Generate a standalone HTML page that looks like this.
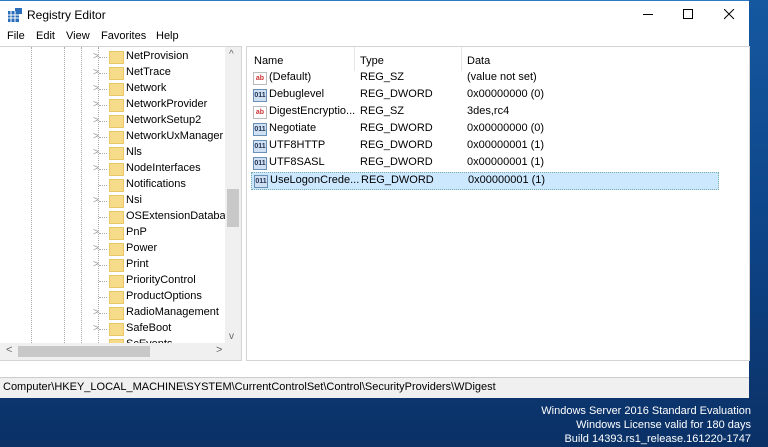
<!DOCTYPE html><html><head><style>
body{margin:0;width:768px;height:447px;overflow:hidden;background:linear-gradient(180deg,#1558a0 0%,#0d4386 55%,#0b3166 100%);font-family:"Liberation Sans",sans-serif;font-size:11px;color:#000;position:relative}
.win{position:absolute;left:0;top:0;width:749px;height:396px;background:#fff;border-top:1px solid #2b79c4}
.title{position:absolute;left:0;top:0;width:749px;height:28px}
.title span{position:absolute;left:27px;top:7px;font-size:12px}
.menu{position:absolute;top:29px;left:0;font-size:11px}
.menu span{position:absolute;top:0}
.tree{position:absolute;left:0;top:45px;width:241px;height:313px;border:1px solid #d4d4d4;border-left:none;overflow:hidden}
.item{position:absolute;left:126px;font-size:11px;white-space:nowrap}
.fold{position:absolute;left:109px;width:13px;height:11px;background:#f6dc8a;border:1px solid #e8c766}
.arr{position:absolute;left:93px;color:#999;font-size:10px}
.list{position:absolute;left:246px;top:45px;width:502px;height:313px;border:1px solid #d4d4d4}
.hdr{position:absolute;top:8px;font-size:11px}
.row{position:absolute;left:4px;height:16px;font-size:11px;width:498px}
.row span{position:absolute;top:1px;white-space:nowrap}
.ic{position:absolute;left:2px;top:2px;width:12px;height:11px;font-size:7px;font-weight:bold;line-height:11px;text-align:center;overflow:hidden}
.sz{color:#c33;border:1px solid #bbb;background:#fff}
.dw{color:#235;background:#cfe0f2;border:1px solid #6a8fb8}
.status{position:absolute;left:0;top:376px;width:749px;height:20px;background:#f0f0f0;border-top:1px solid #ccc;font-size:11px}
.wm{position:absolute;right:17px;color:#fff;font-size:11px;text-align:right}
</style></head><body>
<div class="win">
<div class="title">
<svg style="position:absolute;left:8px;top:7px" width="14" height="14"><rect x="0" y="3" width="11" height="11" fill="#2a6db8"/><rect x="7" y="0" width="7" height="6" fill="#2a6db8"/><path d="M0 7h11M0 10h11M3 3v11M7 3v11" stroke="#fff" stroke-width="1"/></svg>
<span>Registry Editor</span>
<div style="position:absolute;left:643px;top:13px;width:10px;height:1px;background:#000"></div>
<div style="position:absolute;left:683px;top:8px;width:8px;height:8px;border:1px solid #000"></div>
<svg style="position:absolute;left:724px;top:8px" width="11" height="11"><path d="M0 0L10 10M10 0L0 10" stroke="#000" stroke-width="1"/></svg>
</div>
<div class="menu"><span style="left:7px">File</span><span style="left:36px">Edit</span><span style="left:66px">View</span><span style="left:101px">Favorites</span><span style="left:156px">Help</span></div>
<div class="tree">
<div style="position:absolute;left:31px;top:0;height:300px;border-left:1px dotted #aaa"></div>
<div style="position:absolute;left:64px;top:0;height:300px;border-left:1px dotted #aaa"></div>
<div style="position:absolute;left:81px;top:0;height:300px;border-left:1px dotted #aaa"></div>
<div style="position:absolute;left:98px;top:0;height:300px;border-left:1px dotted #aaa"></div>
<div id="t"></div>
<div style="position:absolute;left:225px;top:0;width:16px;height:296px;background:#f0f0f0"></div>
<div style="position:absolute;left:227px;top:142px;width:12px;height:38px;background:#c8c8c8"></div>
<div style="position:absolute;left:229px;top:2px;color:#666;font-size:10px">^</div>
<div style="position:absolute;left:229px;top:284px;color:#666;font-size:10px">v</div>
<div style="position:absolute;left:0;top:296px;width:241px;height:17px;background:#f0f0f0"></div>
<div style="position:absolute;left:18px;top:299px;width:132px;height:11px;background:#c8c8c8"></div>
<div style="position:absolute;left:6px;top:297px;color:#666">&lt;</div>
<div style="position:absolute;left:216px;top:297px;color:#666">&gt;</div>
</div>
<div class="list">
<div class="hdr" style="left:7px">Name</div><div class="hdr" style="left:113px">Type</div><div class="hdr" style="left:220px">Data</div>
<div style="position:absolute;left:107px;top:0;height:24px;border-left:1px solid #e5e5e5"></div>
<div style="position:absolute;left:214px;top:0;height:24px;border-left:1px solid #e5e5e5"></div>
<div id="l"></div>
</div>
<div class="status"><span style="position:absolute;left:3px;top:3px">Computer\HKEY_LOCAL_MACHINE\SYSTEM\CurrentControlSet\Control\SecurityProviders\WDigest</span></div>
</div>
<div class="wm" style="top:405px">Windows Server 2016 Standard Evaluation</div>
<div class="wm" style="top:419px">Windows License valid for 180 days</div>
<div class="wm" style="top:433px">Build 14393.rs1_release.161220-1747</div>
<script>
var names=[["NetProvision",1],["NetTrace",1],["Network",1],["NetworkProvider",1],["NetworkSetup2",1],["NetworkUxManager",1],["Nls",1],["NodeInterfaces",1],["Notifications",0],["Nsi",1],["OSExtensionDatabase",0],["PnP",1],["Power",1],["Print",1],["PriorityControl",0],["ProductOptions",0],["RadioManagement",1],["SafeBoot",1],["ScEvents",0],["ScsiPort",0]];
var h="";names.forEach(function(n,i){var y=3+i*16;h+=(n[1]?'<div class="arr" style="top:'+(y+1)+'px">&gt;</div>':'')+'<div style="position:absolute;left:99px;top:'+(y+7)+'px;width:8px;border-top:1px dotted #aaa"></div><div class="fold" style="top:'+(y+1)+'px"></div><div class="item" style="top:'+y+'px">'+n[0]+'</div>';});
document.getElementById("t").innerHTML=h;
var rows=[["sz","(Default)","REG_SZ","(value not set)"],["dw","Debuglevel","REG_DWORD","0x00000000 (0)"],["sz","DigestEncryptio...","REG_SZ","3des,rc4"],["dw","Negotiate","REG_DWORD","0x00000000 (0)"],["dw","UTF8HTTP","REG_DWORD","0x00000001 (1)"],["dw","UTF8SASL","REG_DWORD","0x00000001 (1)"],["dw","UseLogonCrede...","REG_DWORD","0x00000001 (1)"]];
h="";rows.forEach(function(r,i){var y=23+i*17;var sel=i==6?'background:#cce8ff;border:1px dotted #7aa;width:466px;':'';h+='<div class="row" style="top:'+y+'px;'+sel+'"><div class="ic '+r[0]+'">'+(r[0]=="sz"?"ab":"011")+'</div><span style="left:18px">'+r[1]+'</span><span style="left:109px">'+r[2]+'</span><span style="left:216px">'+r[3]+'</span></div>';});
document.getElementById("l").innerHTML=h;
</script>
</body></html>
